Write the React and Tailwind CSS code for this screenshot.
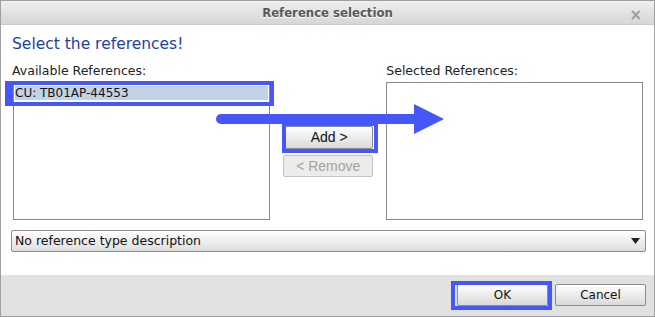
const ui = { fontFamily: '"DejaVu Sans", "Noto Sans", sans-serif' };
const arial = { fontFamily: '"Liberation Sans", Arial, sans-serif' };

function Button({ children, className = '', disabled = false, style = ui }) {
  return (
    <div
      style={style}
      className={`flex items-center justify-center rounded-[2px] border text-[12px] ${
        disabled
          ? 'border-[#c4c4c4] bg-[#ececec] text-[#a3a3a3]'
          : 'border-[#8c8c8c] bg-gradient-to-b from-[#ffffff] to-[#d9d9d9] text-[#111]'
      } ${className}`}
    >
      {children}
    </div>
  );
}

function ListBox({ children, className = '' }) {
  return (
    <div className={`border border-[#8a8a8a] bg-white ${className}`}>{children}</div>
  );
}

export default function App() {
  return (
    <div className="relative flex h-[317px] w-[655px] flex-col overflow-hidden border border-[#a0a0a0] bg-white" style={ui}>
      {/* title bar */}
      <div className="relative flex h-[24px] shrink-0 items-center justify-center border-b border-[#cacaca] bg-gradient-to-b from-[#efefef] to-[#d6d6d6]">
        <span
          className="text-[13px] font-bold text-[#585858]"
          style={{ fontFamily: '"DejaVu Sans Condensed", "DejaVu Sans", sans-serif', textShadow: '0 1px 0 #fff' }}
        >
          Reference selection
        </span>
        <span className="absolute right-[12px] top-[3px] text-[15px] font-bold text-[#9a9a9a]">×</span>
      </div>

      {/* body */}
      <div className="flex h-[250px] shrink-0 flex-col px-[11px]">
        <div className="mt-[10px] h-[18px] text-[15.5px] leading-[18px] text-[#1e3fa4]">Select the references!</div>

        <div className="mt-[10px] flex">
          <div className="flex w-[259px] flex-col pl-[1px]">
            <div className="ml-[-1px] h-[15px] text-[12.5px] leading-[15px] text-[#222]">Available References:</div>
            <ListBox className="mt-[4px] h-[138px] px-[1px] pt-[3px]">
              <div className="flex h-[14px] items-center bg-[#c3d3e7] text-[12px] text-[#111]">
                CU: TB01AP-44553
              </div>
            </ListBox>
          </div>

          <div className="flex w-[117px] flex-col items-end pr-[13px] pt-[63px]">
            <Button className="h-[23px] w-[88px]" style={arial}>
              <span className="text-[14px]">Add &gt;</span>
            </Button>
            <Button className="mt-[6px] h-[22px] w-[90px]" disabled style={arial}>
              <span className="text-[14px]">&lt; Remove</span>
            </Button>
          </div>

          <div className="flex w-[258px] flex-col">
            <div className="h-[15px] text-[12.5px] leading-[15px] text-[#222]">Selected References:</div>
            <ListBox className="mt-[4px] h-[138px]" />
          </div>
        </div>

        <div className="mt-[10px] ml-[-1px] flex h-[22px] w-[635px] items-center justify-between rounded-[2px] border border-[#8c8c8c] bg-gradient-to-b from-[#ffffff] to-[#dedede] pl-[3px] pr-[5px]">
          <span className="text-[12.5px] text-[#111]">No reference type description</span>
          <svg width="9" height="6" viewBox="0 0 9 6">
            <path d="M0 0 H9 L4.5 6 Z" fill="#222" />
          </svg>
        </div>
      </div>

      {/* footer */}
      <div className="flex flex-1 items-start justify-end gap-[7px] bg-[#e1e1e1] pr-[8px] pt-[9px]">
        <Button className="h-[22px] w-[91px] border-[#6e6e6e]">OK</Button>
        <Button className="h-[22px] w-[91px]">Cancel</Button>
      </div>

      {/* annotations drawn over the dialog */}
      <div className="pointer-events-none absolute left-[4px] top-[80px] h-[25px] w-[269px] border-[4px] border-l-[8px] border-[#4557f9]" />
      <div className="pointer-events-none absolute left-[281px] top-[121px] h-[31px] w-[96px] border-[4px] border-[#4557f9]" />
      <div className="pointer-events-none absolute left-[450px] top-[280px] h-[29px] w-[101px] border-[4px] border-[#4557f9]" />
      <svg className="pointer-events-none absolute left-[210px] top-[100px]" width="240" height="36" viewBox="0 0 240 36">
        <line x1="10" y1="18" x2="206" y2="18" stroke="#4557f9" strokeWidth="10" strokeLinecap="round" />
        <path d="M203 3 L233 18 L203 33 Z" fill="#4557f9" />
      </svg>
    </div>
  );
}
